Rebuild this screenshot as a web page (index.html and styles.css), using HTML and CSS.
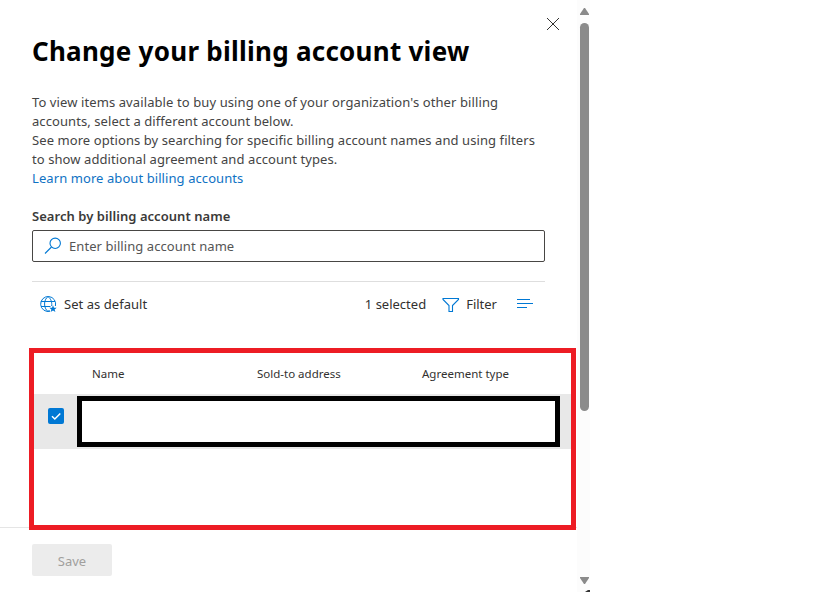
FILE: index.html
```html
<!DOCTYPE html>
<html lang="en">
<head>
<meta charset="utf-8">
<title>Change your billing account view</title>
<link rel="stylesheet" href="styles.css">
</head>
<body>
<div class="shell">
  <div class="panel">
    <main class="content">
      <div class="topbar">
        <button class="close" aria-label="Close"><svg width="14" height="14" viewBox="0 0 14 14"><path d="M1 1L13 13M13 1L1 13" stroke="#323130" stroke-width="1" fill="none"/></svg></button>
      </div>
      <h1>Change your billing account view</h1>
      <div class="intro">
        <p class="first">To view items available to buy using one of your organization's other billing</p>
        <p>accounts, select a different account below.</p>
        <p>See more options by searching for specific billing account names and using filters</p>
        <p>to show additional agreement and account types.</p>
        <a>Learn more about billing accounts</a>
      </div>
      <div class="label"><span>Search by billing account name</span></div>
      <div class="search">
        <svg width="18" height="18" viewBox="0 0 18 18" fill="none" stroke="#0078d4" stroke-width="1.1"><circle cx="11.2" cy="6.3" r="5.2"/><path d="M7.5 10L1 16.5"/></svg>
        <span>Enter billing account name</span>
      </div>
      <div class="commands">
        <svg width="17" height="17" viewBox="0 0 17 17" fill="none" stroke="#0078d4" stroke-width="1"><path d="M15.4 10A7.5 7.5 0 1 0 10 15.3M1 5.5H15M1 10.5H10.5M8 .5C3.4 4 3.4 12 8 15.5M8 .5C11.4 3.2 12 6.5 11.7 10M8 15.5L9.5 14"/><path d="M13 9.2l1 2.5 2.7.1-2.1 1.7.8 2.6-2.4-1.5-2.4 1.5.8-2.6-2.1-1.7 2.7-.1z" fill="#0078d4" stroke="none"/></svg>
        <span class="default">Set as default</span>
        <span class="selected">1 selected</span>
        <svg class="funnel" width="18" height="16" viewBox="0 0 18 16" fill="none" stroke="#0078d4" stroke-width="1.1"><path d="M1 1.5H16.5V2.5L10.5 8.5V14.5H7V8.5L1 2.5Z"/></svg>
        <span class="filter">Filter</span>
        <svg class="lines" width="16" height="12" viewBox="0 0 16 12" stroke="#0078d4"><path d="M0 1.5H13M0 5.5H16M0 9.5H10"/></svg>
      </div>
    </main>
    <section class="accounts">
      <div class="row"><span></span><span>Name</span><span>Sold-to address</span><span>Agreement type</span></div>
      <div class="row-selected">
        <div class="check"><svg width="16" height="16" viewBox="0 0 16 16"><path d="M4 8.3L6.8 11L12.3 5.5" fill="none" stroke="#fff" stroke-width="1.5"/></svg></div>
        <div class="redacted"></div>
      </div>
    </section>
    <footer><button class="save"><span>Save</span></button></footer>
  </div>
  <div class="scrollbar">
    <svg width="9" height="7" viewBox="0 0 9 7"><path d="M4 0H5L9 6V7H0V6Z" fill="#8a8a8a"/></svg>
    <div class="thumb"></div>
    <svg width="9" height="7" viewBox="0 0 9 7"><path d="M0 0H9V1L5 7H4L0 1Z" fill="#8a8a8a"/></svg>
    <svg class="corner" width="5" height="2" viewBox="0 0 5 2"><path d="M0 2L3 0H5V2Z" fill="#333"/></svg>
  </div>
</div>
</body>
</html>
```
FILE: styles.css
```css
* { box-sizing: border-box; }
body { margin: 0; background: #fff; color: #323130; font: 14px/19px "Noto Sans", "Open Sans", sans-serif; overflow: hidden; }
button { border: 0; padding: 0; background: none; font: inherit; }
svg { display: block; flex: none; }
span, p, a, h1 { white-space: nowrap; }
.shell { display: flex; width: 590px; height: 592px; }
.panel { width: 577px; height: 592px; display: flex; flex-direction: column; }
.content { height: 348px; padding: 0 32px; display: flex; flex-direction: column; }
.topbar { height: 31px; padding: 17px 0 0 514px; }
.close { display: block; width: 14px; height: 14px; }
h1 { margin: 0; height: 40px; font-size: 26px; line-height: 40px; font-weight: 700; letter-spacing: .26px; color: #000; }
.intro { margin-top: 22px; color: #444; font-size: 13px; letter-spacing: .08px; }
.intro p { margin: 0; }
.intro .first { letter-spacing: .1px; }
.intro a { display: block; color: #0f72c4; }
.label { margin-top: 19px; font-weight: 600; font-size: 13px; letter-spacing: .05px; color: #3b3a39; }
.search { margin-top: 4px; width: 513px; height: 32px; border: 1px solid #484644; border-radius: 2px; display: flex; align-items: center; gap: 7px; padding-left: 11px; font-size: 13px; letter-spacing: .07px; color: #555; }
.commands { margin-top: 19px; width: 513px; height: 46px; border-top: 1px solid #dedede; display: flex; align-items: center; padding: 0 12px 0 8px; font-size: 13px; }
.default { margin-left: 7px; letter-spacing: .04px; }
.selected { margin-left: auto; }
.funnel { margin: 0 6px 0 16px; }
.filter { margin-right: 20px; }
.lines { margin-top: -2px; }
.accounts { position: relative; width: 547px; height: 182px; flex: none; margin: 0 0 -3px 29px; border: 5px solid #ed1c24; background: #fff; }
.row { height: 41px; display: grid; grid-template-columns: 58px 165px 165px 1fr; align-items: center; font-size: 11.5px; }
.row-selected { height: 55px; background: #e8e8e8; display: flex; padding: 2px 11px 2px 14px; }
.check { width: 16px; height: 16px; margin: 12px 13px 0 0; border-radius: 2px; background: #0078d4; }
.redacted { flex: 1; height: 51px; border: 5px solid #000; background: #fff; }
footer { height: 65px; border-top: 1px solid #e5e5e5; padding: 16px 32px; }
.save { width: 80px; height: 32px; border-radius: 2px; background: #ececec; color: #a19f9d; font-size: 13px; line-height: 34px; }
.scrollbar { width: 13px; padding: 8px 1px 0 3px; background: #fcfcfc; display: flex; flex-direction: column; }
.thumb { width: 9px; height: 388px; margin: 8px 0 166px; border-radius: 5px; background: #8b8b8b; flex: none; }
.corner { margin: 6px 0 0 5px; }
```
